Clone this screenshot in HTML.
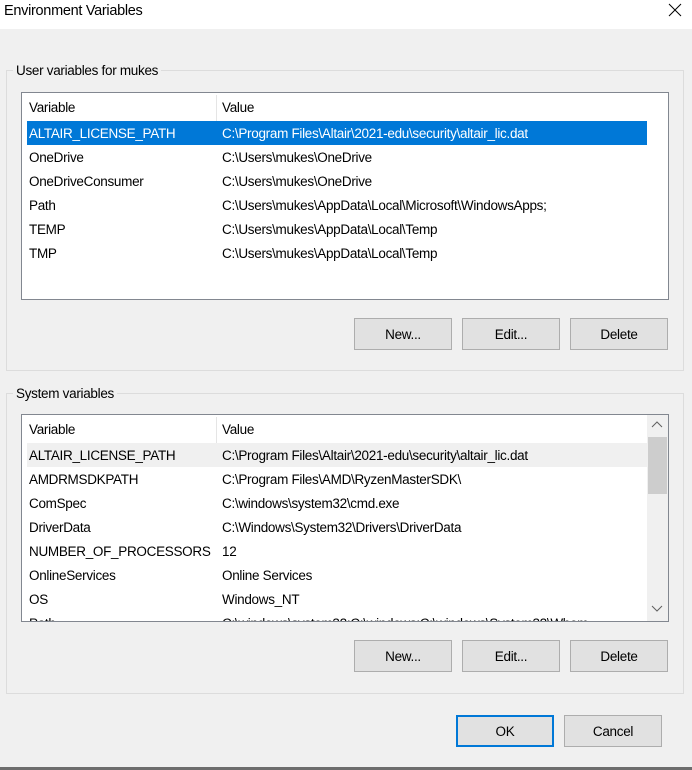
<!DOCTYPE html>
<html><head><style>
*{margin:0;padding:0;box-sizing:border-box}
body{width:692px;height:770px;background:#f0f0f0;font-family:"Liberation Sans",sans-serif;font-size:13.5px;color:#000;position:relative;overflow:hidden;letter-spacing:-0.3px}
.abs{position:absolute}
.title{left:0;top:0;width:692px;height:29px;background:#fff}
.group{border:1px solid #dcdcdc}
.glabel{background:#f0f0f0;padding:0 3px}
.list{background:#fff;border:1px solid #828790;overflow:hidden}
.row{position:absolute;left:5px;height:24px;line-height:26px;width:620px;white-space:nowrap}
.row span{position:absolute}
.btn{background:#e1e1e1;border:1px solid #adadad;text-align:center;line-height:32px;height:32px;width:98px}
</style></head><body>
<div class="abs title"></div>
<div class="abs" style="left:4px;top:3px;font-size:14.5px">Environment Variables</div>
<svg class="abs" style="left:668px;top:3px" width="14" height="14"><path d="M1 1L13 13M13 1L1 13" stroke="#000" stroke-width="1"/></svg>

<div class="abs group" style="left:6px;top:70px;width:678px;height:301px"></div>
<div class="abs glabel" style="left:13px;top:63px">User variables for mukes</div>
<div class="abs list" style="left:21px;top:92px;width:648px;height:208px">
 <div class="abs" style="left:194px;top:2px;width:1px;height:26px;background:#e5e5e5"></div>
 <div class="row" style="top:2px"><span style="left:2px">Variable</span><span style="left:195px">Value</span></div>
 <div class="row" style="top:28px;background:#0078d7;color:#fff;width:620px"><span style="left:2px">ALTAIR_LICENSE_PATH</span><span style="left:195px">C:\Program Files\Altair\2021-edu\security\altair_lic.dat</span></div>
 <div class="row" style="top:52px"><span style="left:2px">OneDrive</span><span style="left:195px">C:\Users\mukes\OneDrive</span></div>
 <div class="row" style="top:76px"><span style="left:2px">OneDriveConsumer</span><span style="left:195px">C:\Users\mukes\OneDrive</span></div>
 <div class="row" style="top:100px"><span style="left:2px">Path</span><span style="left:195px">C:\Users\mukes\AppData\Local\Microsoft\WindowsApps;</span></div>
 <div class="row" style="top:124px"><span style="left:2px">TEMP</span><span style="left:195px">C:\Users\mukes\AppData\Local\Temp</span></div>
 <div class="row" style="top:148px"><span style="left:2px">TMP</span><span style="left:195px">C:\Users\mukes\AppData\Local\Temp</span></div>
</div>
<div class="abs btn" style="left:354px;top:318px">New...</div>
<div class="abs btn" style="left:462px;top:318px">Edit...</div>
<div class="abs btn" style="left:570px;top:318px">Delete</div>

<div class="abs group" style="left:6px;top:393px;width:678px;height:301px"></div>
<div class="abs glabel" style="left:13px;top:386px">System variables</div>
<div class="abs list" style="left:21px;top:414px;width:648px;height:208px">
 <div class="abs" style="left:194px;top:2px;width:1px;height:26px;background:#e5e5e5"></div>
 <div class="row" style="top:2px"><span style="left:2px">Variable</span><span style="left:195px">Value</span></div>
 <div class="row" style="top:28px;background:#f0f0f0"><span style="left:2px">ALTAIR_LICENSE_PATH</span><span style="left:195px">C:\Program Files\Altair\2021-edu\security\altair_lic.dat</span></div>
 <div class="row" style="top:52px"><span style="left:2px">AMDRMSDKPATH</span><span style="left:195px">C:\Program Files\AMD\RyzenMasterSDK\</span></div>
 <div class="row" style="top:76px"><span style="left:2px">ComSpec</span><span style="left:195px">C:\windows\system32\cmd.exe</span></div>
 <div class="row" style="top:100px"><span style="left:2px">DriverData</span><span style="left:195px">C:\Windows\System32\Drivers\DriverData</span></div>
 <div class="row" style="top:124px"><span style="left:2px">NUMBER_OF_PROCESSORS</span><span style="left:195px">12</span></div>
 <div class="row" style="top:148px"><span style="left:2px">OnlineServices</span><span style="left:195px">Online Services</span></div>
 <div class="row" style="top:172px"><span style="left:2px">OS</span><span style="left:195px">Windows_NT</span></div>
 <div class="row" style="top:196px"><span style="left:2px">Path</span><span style="left:195px">C:\windows\system32;C:\windows;C:\windows\System32\Wbem</span></div>
 <div class="abs" style="left:625px;top:0;width:21px;height:206px;background:#f0f0f0"></div>
 <div class="abs" style="left:626px;top:22px;width:19px;height:57px;background:#cdcdcd"></div>
 <svg class="abs" style="left:629px;top:6px" width="12" height="8"><path d="M1 6L6 1L11 6" stroke="#606060" fill="none"/></svg>
 <svg class="abs" style="left:629px;top:190px" width="12" height="8"><path d="M1 1L6 6L11 1" stroke="#606060" fill="none"/></svg>
</div>
<div class="abs btn" style="left:354px;top:640px">New...</div>
<div class="abs btn" style="left:462px;top:640px">Edit...</div>
<div class="abs btn" style="left:570px;top:640px">Delete</div>

<div class="abs btn" style="left:456px;top:715px;border:2px solid #0078d7;line-height:30px">OK</div>
<div class="abs btn" style="left:564px;top:715px">Cancel</div>
<div class="abs" style="left:0;top:767px;width:692px;height:3px;background:#6d6d6d"></div>
</body></html>
